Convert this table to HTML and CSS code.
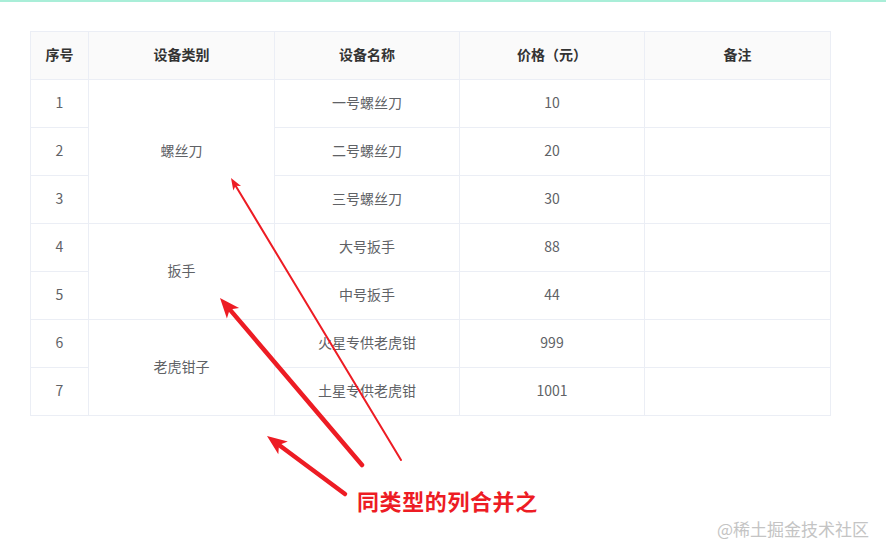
FILE: index.html
```html
<!DOCTYPE html>
<html lang="zh-CN">
<head>
    <meta charset="UTF-8">
    <meta name="viewport" content="width=device-width, initial-scale=1.0">
    <title>合并单元格</title>
    <link rel="stylesheet" href="styles.css">
</head>
<body>
    <div class="top-line"></div>
    <div class="page">
        <table class="grid">
            <colgroup>
                <col class="c-no">
                <col class="c-type">
                <col class="c-name">
                <col class="c-price">
                <col class="c-note">
            </colgroup>
            <thead>
                <tr>
                    <th>序号</th>
                    <th>设备类别</th>
                    <th>设备名称</th>
                    <th>价格（元）</th>
                    <th>备注</th>
                </tr>
            </thead>
            <tbody>
                <tr><td>1</td><td rowspan="3">螺丝刀</td><td>一号螺丝刀</td><td>10</td><td></td></tr>
                <tr><td>2</td><td>二号螺丝刀</td><td>20</td><td></td></tr>
                <tr><td>3</td><td>三号螺丝刀</td><td>30</td><td></td></tr>
                <tr><td>4</td><td rowspan="2">扳手</td><td>大号扳手</td><td>88</td><td></td></tr>
                <tr><td>5</td><td>中号扳手</td><td>44</td><td></td></tr>
                <tr><td>6</td><td rowspan="2">老虎钳子</td><td>火星专供老虎钳</td><td>999</td><td></td></tr>
                <tr><td>7</td><td>土星专供老虎钳</td><td>1001</td><td></td></tr>
            </tbody>
        </table>
    </div>

    <svg class="marks" width="886" height="558" viewBox="0 0 886 558">
        <line x1="401" y1="460" x2="235.6" y2="185.7" stroke="#ed1c24" stroke-width="2" stroke-linecap="round"/>
        <polygon points="231,178 241,186 235.6,185.7 233.3,190.6" fill="#ed1c24"/>
        <line x1="362" y1="465" x2="229.7" y2="309.4" stroke="#ed1c24" stroke-width="4.5" stroke-linecap="round"/>
        <polygon points="220,298 239.1,308.1 229.7,309.4 226.9,318.4" fill="#ed1c24"/>
        <line x1="345" y1="494" x2="279" y2="445" stroke="#ed1c24" stroke-width="4.5" stroke-linecap="round"/>
        <polygon points="267,436 287.8,441.5 279,445 278.3,454.3" fill="#ed1c24"/>
    </svg>
    <div class="note">同类型的列合并之</div>
    <div class="watermark">@稀土掘金技术社区</div>
</body>
</html>
```

FILE: styles.css
```css
body {
    margin: 0;
    font-family: "Microsoft YaHei", "Noto Sans CJK SC", sans-serif;
    background-color: #fff;
    width: 886px;
    height: 558px;
    position: relative;
    overflow: hidden;
}
.top-line {
    height: 2px;
    background-color: #a9eed8;
}
.page {
    padding: 29px 30px 0;
}
.grid {
    border-collapse: collapse;
    width: 800px;
    table-layout: fixed;
    font-size: 14px;
    color: #606266;
}
.c-no { width: 58px; }
.c-type { width: 186px; }
.c-name { width: 185px; }
.c-price { width: 185px; }
.c-note { width: 186px; }
.grid th,
.grid td {
    border: 1px solid #ebeef5;
    text-align: center;
    padding: 0 0 3px;
    height: 44px;
}
.grid th {
    background-color: #fafafa;
    color: #333;
    font-weight: bold;
}
.marks {
    position: absolute;
    left: 0;
    top: 0;
    pointer-events: none;
}
.note {
    position: absolute;
    left: 357px;
    top: 484px;
    font-size: 22px;
    font-weight: bold;
    color: #ed1c24;
    letter-spacing: 0.6px;
}
.watermark {
    position: absolute;
    right: 17px;
    top: 516px;
    font-size: 17px;
    color: #c4c4c4;
}
```
